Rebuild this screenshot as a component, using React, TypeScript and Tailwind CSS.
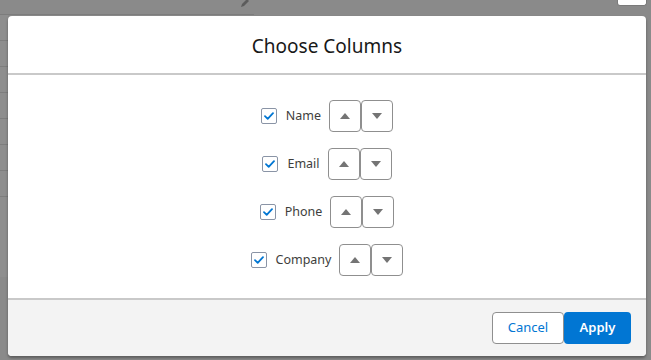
import React, { useState } from 'react';

interface Column {
  id: string;
  label: string;
  visible: boolean;
}

const Caret = ({ up }: { up?: boolean }) => (
  <svg width="10" height="6" viewBox="0 0 10 6" className="fill-[#747474]">
    {up ? <polygon points="5,0 10,6 0,6" /> : <polygon points="0,0 10,0 5,6" />}
  </svg>
);

const ColumnRow = ({
  column,
  onToggle,
  onMove
}: {
  column: Column;
  onToggle: () => void;
  onMove: (dir: number) => void;
}) => (
  <div className="flex items-center h-[32px]">
    <button
      onClick={onToggle}
      className="w-[16px] h-[16px] border border-[#8a94a6] rounded-[2px] bg-white flex items-center justify-center"
    >
      {column.visible && (
        <svg width="10" height="8" viewBox="0 0 10 8" fill="none">
          <path d="M1 4.2 L3.7 6.8 L9 1.2" stroke="#0176d3" strokeWidth="1.8" strokeLinecap="round" strokeLinejoin="round" />
        </svg>
      )}
    </button>
    <span className="ml-[9px] mr-[8px] text-[12.5px] text-[#3e3e3c]">{column.label}</span>
    <div className="flex">
      <button
        onClick={() => onMove(-1)}
        className="w-[32px] h-[32px] border border-[#8f8f8f] rounded-[4px] bg-white flex items-center justify-center"
      >
        <Caret up />
      </button>
      <button
        onClick={() => onMove(1)}
        className="w-[32px] h-[32px] border border-[#8f8f8f] rounded-[4px] bg-white flex items-center justify-center"
      >
        <Caret />
      </button>
    </div>
  </div>
);

export default function App() {
  const [columns, setColumns] = useState<Column[]>([
    { id: 'name', label: 'Name', visible: true },
    { id: 'email', label: 'Email', visible: true },
    { id: 'phone', label: 'Phone', visible: true },
    { id: 'company', label: 'Company', visible: true }
  ]);

  const toggle = (i: number) =>
    setColumns(prev => prev.map((c, idx) => (idx === i ? { ...c, visible: !c.visible } : c)));

  const move = (i: number, dir: number) => {
    const j = i + dir;
    if (j < 0 || j >= columns.length) return;
    const next = [...columns];
    [next[i], next[j]] = [next[j], next[i]];
    setColumns(next);
  };

  return (
    <div className="relative w-[651px] h-[360px] overflow-hidden bg-[#8a8a8a] font-['Segoe_UI','Noto_Sans',sans-serif]">
      {/* Page behind the overlay */}
      <div className="flex flex-col">
        <div className="flex h-[15px] items-start">
          <div className="w-[254px] h-[15px] border-b border-[#7c7c7c]" />
          <div className="relative w-[363px] h-[15px]">
            <svg className="absolute left-[-14px] top-[-2px]" width="10" height="10" viewBox="0 0 10 10">
              <path d="M1 9 L2 6 L7 1 L9 3 L4 8 Z" fill="#5c5c5c" />
            </svg>
          </div>
          <div className="w-[30px] h-[6px] bg-white rounded-b-[3px] border border-t-0 border-[#7a7a7a]" />
        </div>
        <div className="w-[8px] flex flex-col bg-[#8e8e8e]">
          {[0, 1, 2, 3, 4, 5, 6].map(i => (
            <div key={i} className="h-[26px] border-b border-[#7e7e7e]" />
          ))}
          <div className="h-[80px]" />
        </div>
      </div>

      {/* Modal */}
      <div className="absolute left-[8px] top-[16px] w-[638px] bg-white rounded-[4px] shadow-[0_2px_3px_rgba(0,0,0,0.35)] flex flex-col overflow-hidden">
        <div className="h-[59px] flex items-center justify-center border-b-2 border-[#c9c9c9] pt-[3px]">
          <h2 className="text-[19px] text-[#181818] leading-none">Choose Columns</h2>
        </div>
        <div className="h-[223px] flex flex-col items-center gap-[16px] pt-[25px]">
          {columns.map((c, i) => (
            <ColumnRow key={c.id} column={c} onToggle={() => toggle(i)} onMove={dir => move(i, dir)} />
          ))}
        </div>
        <div className="border-t-2 border-[#c9c9c9] bg-[#f3f3f3] h-[58px] flex items-center justify-end pr-[15px] pb-[1px]">
          <button className="h-[32px] w-[72px] border border-[#8f8f8f] rounded-[4px] bg-white text-[13px] text-[#0176d3]">
            Cancel
          </button>
          <button className="h-[32px] w-[67px] rounded-[4px] bg-[#0176d3] text-[13px] font-semibold text-white">
            Apply
          </button>
        </div>
      </div>
    </div>
  );
}
